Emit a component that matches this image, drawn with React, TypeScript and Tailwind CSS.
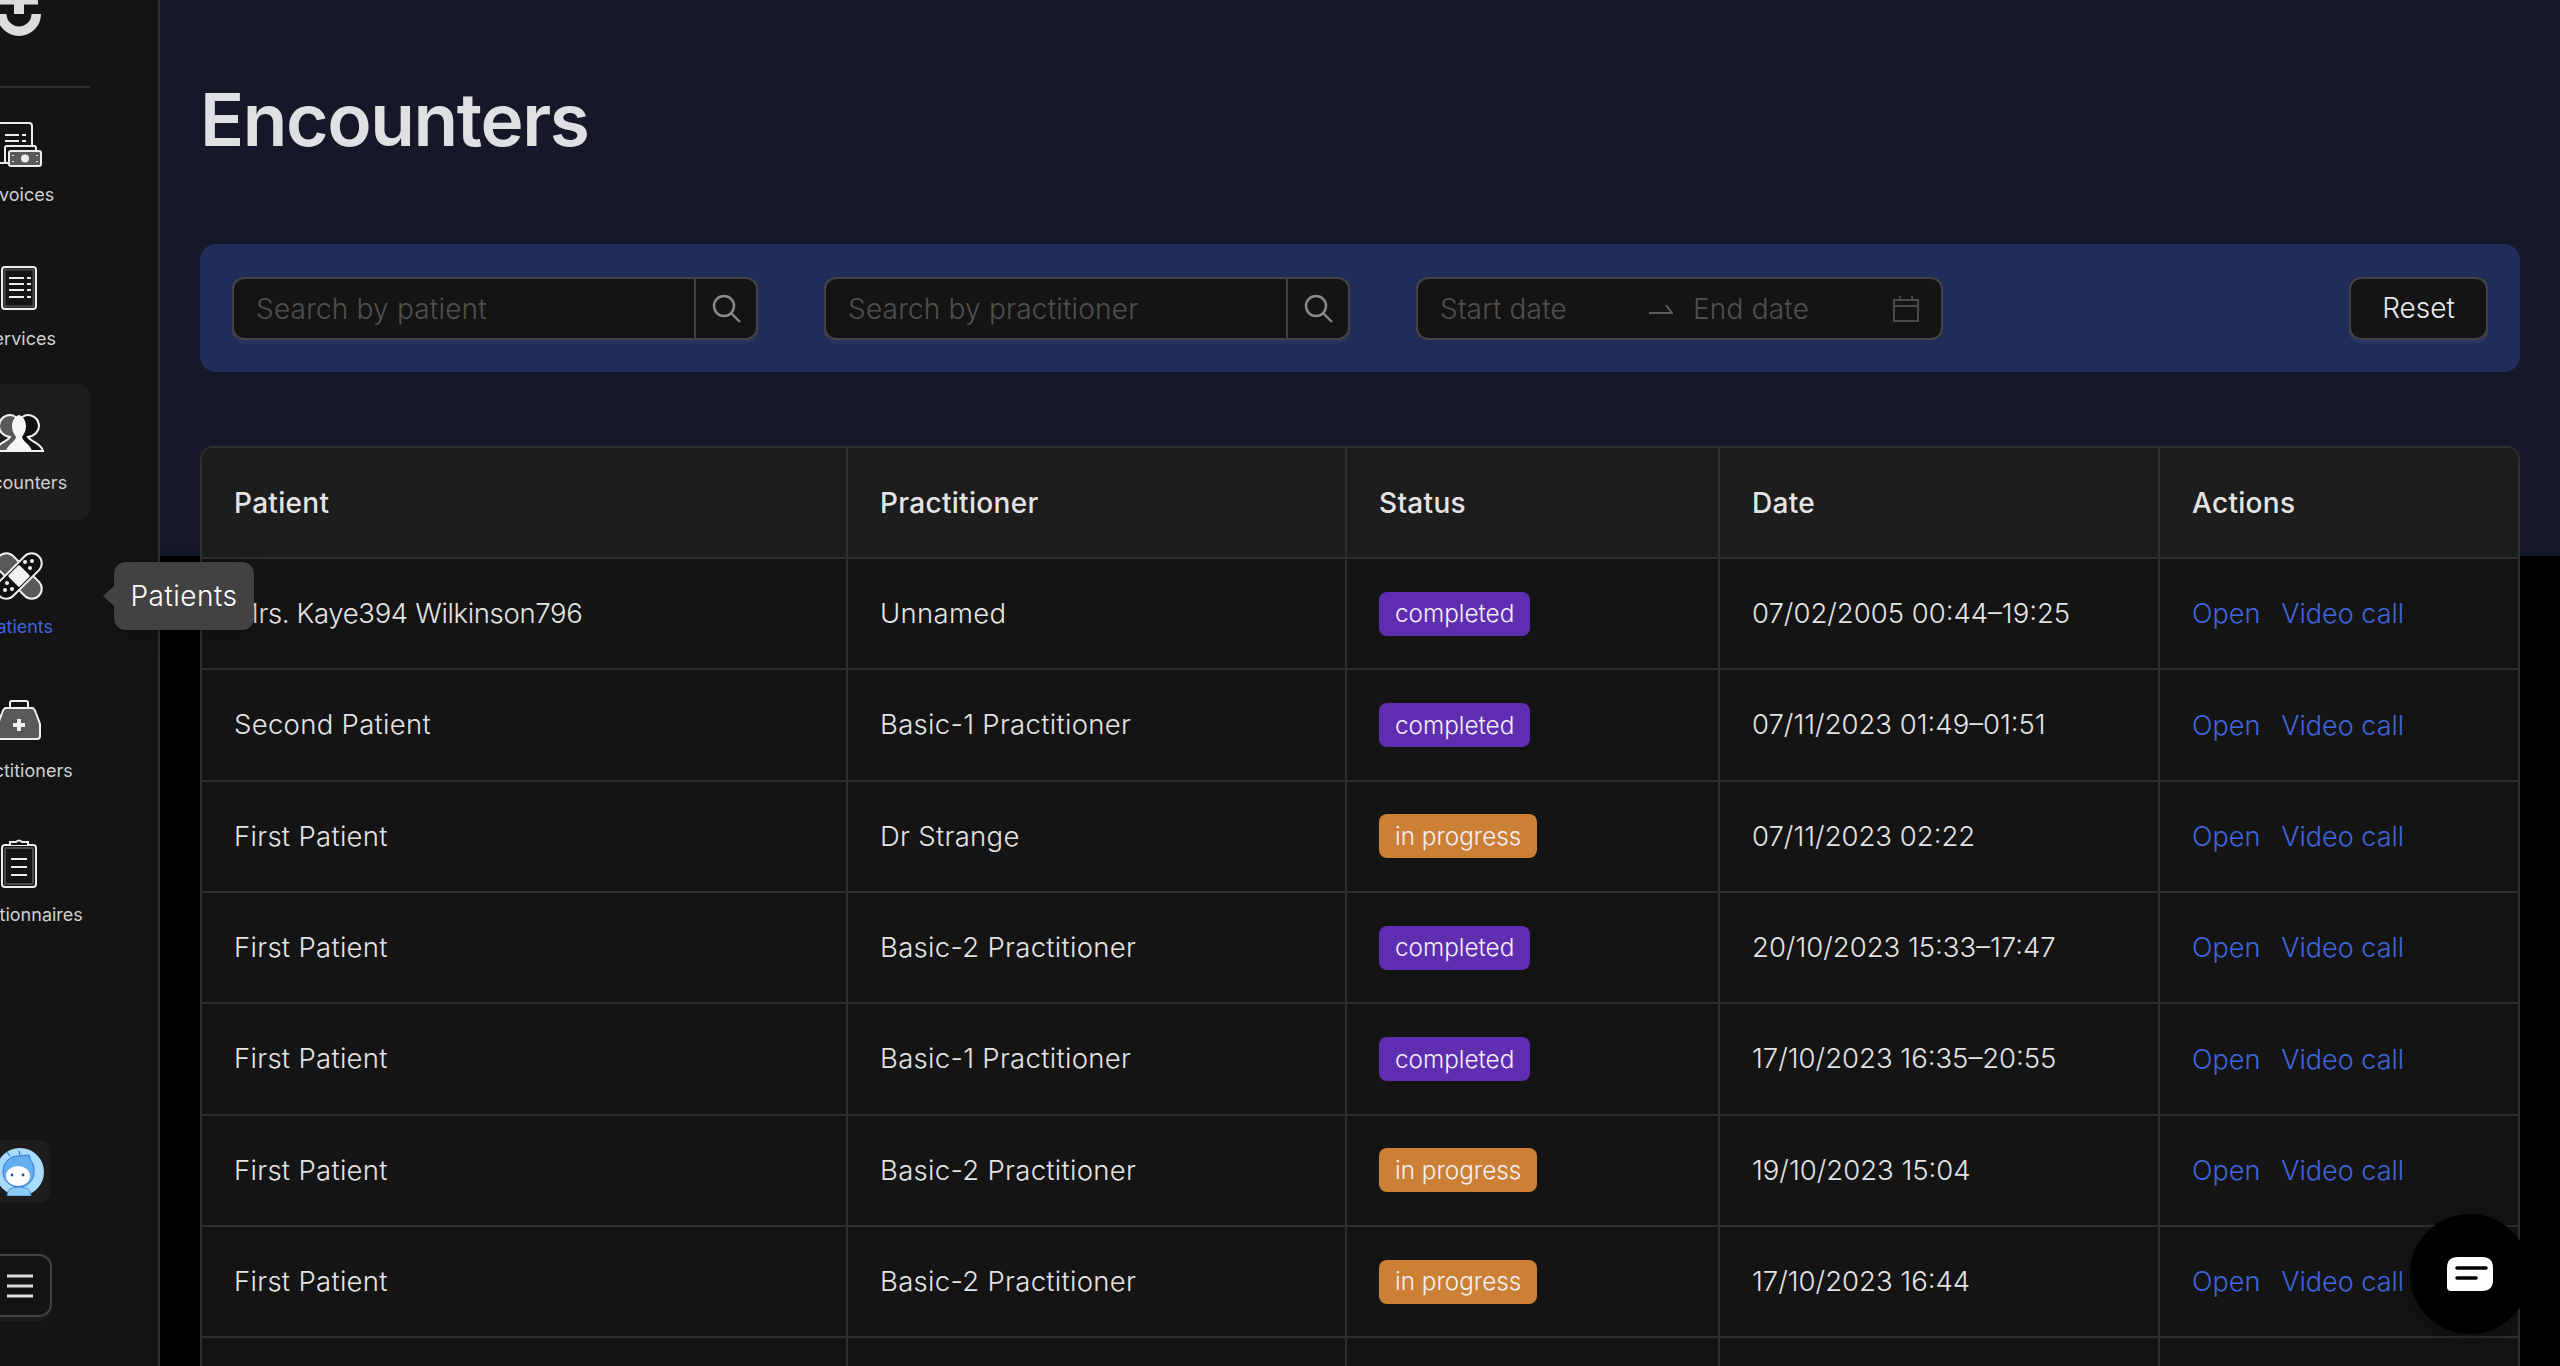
import type { ReactNode } from "react";

const rows = [
  { patient: "Mrs. Kaye394 Wilkinson796", practitioner: "Unnamed", status: "completed", date: "07/02/2005 00:44–19:25" },
  { patient: "Second Patient", practitioner: "Basic-1 Practitioner", status: "completed", date: "07/11/2023 01:49–01:51" },
  { patient: "First Patient", practitioner: "Dr Strange", status: "in progress", date: "07/11/2023 02:22" },
  { patient: "First Patient", practitioner: "Basic-2 Practitioner", status: "completed", date: "20/10/2023 15:33–17:47" },
  { patient: "First Patient", practitioner: "Basic-1 Practitioner", status: "completed", date: "17/10/2023 16:35–20:55" },
  { patient: "First Patient", practitioner: "Basic-2 Practitioner", status: "in progress", date: "19/10/2023 15:04" },
  { patient: "First Patient", practitioner: "Basic-2 Practitioner", status: "in progress", date: "17/10/2023 16:44" },
];

const gridCols = "grid grid-cols-[646px_499px_373px_440px_1fr]";
const cell = "flex items-center px-[32px] border-r-2 border-[#2f2f2f] last:border-r-0";

function InvoicesIcon() {
  return (
    <svg width="44" height="44" viewBox="0 0 44 44" fill="none" stroke="#ececec" strokeWidth="2" className="overflow-visible">
      <rect x="1" y="1" width="34" height="40" rx="3" fill="#141414" />
      <path d="M8 13h14M8 19h14M25 13h4M25 19h4" />
      <rect x="8" y="24" width="31" height="17" rx="2" fill="#141414" />
      <rect x="12" y="29" width="32" height="15" rx="2" fill="#595959" />
      <circle cx="28" cy="36.5" r="4" fill="#ececec" stroke="none" />
      <path d="M16 33v1M16 39v1M40 33v1M40 39v1" />
    </svg>
  );
}

function ServicesIcon() {
  return (
    <svg width="44" height="44" viewBox="0 0 44 44" fill="none" stroke="#ececec" strokeWidth="2">
      <rect x="5" y="1" width="34" height="42" rx="3" fill="#141414" />
      <rect x="7.5" y="3.5" width="29" height="37" rx="1" stroke="#4a4a4a" />
      <path d="M12 12h15M12 18h15M12 24h15M12 31h15M30 12h4M30 18h4M30 24h4M30 31h4" />
    </svg>
  );
}

function EncountersIcon() {
  return (
    <svg width="44" height="44" viewBox="0 0 44 44" fill="none" stroke="#f2f2f2" strokeWidth="2" className="overflow-visible mt-[2px]">
      <path d="M31 25c3 5 13 6 15 14H22V10c2-5 5-7 9-7 6 0 11 5 11 11 0 5-4 10-11 11Z" fill="#111" />
      <path d="M13 25c-3 5-13 6-15 14h24V10c-2-5-5-7-9-7C7 3 2 8 2 14c0 5 4 10 11 11Z" fill="#595959" />
      <path d="M22 3c4 1 7 6 7 11 0 5-2 8-4 11 1 5 8 7 10 14H9c2-7 9-9 10-14-2-3-4-6-4-11 0-5 3-10 7-11Z" fill="#f6f6f6" stroke="none" />
      <path d="M-2 39h48" />
    </svg>
  );
}

function PatientsIcon() {
  return (
    <svg width="44" height="44" viewBox="0 0 44 44" fill="none" stroke="#f0f0f0" strokeWidth="2" className="overflow-visible">
      <rect x="-6" y="12" width="56" height="20" rx="10" fill="#595959" transform="rotate(45 22 22)" />
      <rect x="-6" y="12" width="56" height="20" rx="10" fill="#111" transform="rotate(-45 22 22)" />
      <rect x="14" y="14" width="16" height="16" rx="1.5" fill="#f2f2f2" stroke="none" transform="rotate(-45 22 22)" />
      <g fill="#f2f2f2" stroke="none">
        <circle cx="28" cy="8" r="2" />
        <circle cx="35" cy="7" r="2" />
        <circle cx="33" cy="14" r="2" />
        <circle cx="10" cy="29" r="2" />
        <circle cx="8" cy="36" r="2" />
        <circle cx="15" cy="35" r="2" />
      </g>
    </svg>
  );
}

function PractitionersIcon() {
  return (
    <svg width="44" height="44" viewBox="0 0 44 44" fill="none" stroke="#f0f0f0" strokeWidth="2" className="overflow-visible">
      <path d="M13 10V5q0-2 2-2h14q2 0 2 2v5" />
      <path d="M9 10h26c2 0 3 2 4 5l4 11v12q0 3-3 3H4q-3 0-3-3V26l4-11c1-3 2-5 4-5Z" fill="#595959" />
      <path d="M16 27h12M22 21v12" strokeWidth="4" />
    </svg>
  );
}

function QuestionnairesIcon() {
  return (
    <svg width="44" height="50" viewBox="0 0 44 50" fill="none" stroke="#ececec" strokeWidth="2" className="-mt-[3px]">
      <rect x="5" y="6" width="34" height="42" rx="3" fill="#141414" />
      <rect x="8" y="9" width="28" height="36" rx="1" stroke="#4a4a4a" />
      <path d="M13 6V3h6q3-3 6 0h6v3" fill="#141414" />
      <path d="M14 20h16M14 28h16M14 36h16" />
    </svg>
  );
}

function Avatar() {
  return (
    <svg width="48" height="48" viewBox="0 0 48 48">
      <circle cx="24" cy="24" r="24" fill="#a9dbff" />
      <path d="M7 24c0-10 7-16 15-16 4 0 8-1 11-1 1 3 1 5 3 7 2 3 2 6 2 10 0 9-7 15-15 15S7 33 7 24Z" fill="#62aef0" stroke="#2f78d0" strokeWidth="1" />
      <path d="M14 8l-3-4M24 7l-1-4" stroke="#2f78d0" strokeWidth="1.2" fill="none" />
      <ellipse cx="22" cy="28" rx="12" ry="10" fill="#fff" />
      <circle cx="16" cy="27" r="1.400" fill="#1f4fa8" />
      <circle cx="27" cy="27" r="1.400" fill="#1f4fa8" />
      <path d="M11 48c0-6 4-9 12-9s12 3 12 9Z" fill="#8ccaf8" stroke="#2f78d0" strokeWidth="0.800" />
    </svg>
  );
}

function NavItem({ label, icon, active, selected }: { label: string; icon: ReactNode; active?: boolean; selected?: boolean }) {
  return (
    <div className={`h-[136px] rounded-[13px] flex flex-col items-center pt-[26px] ${active ? "bg-[#1d1d1d]" : ""}`}>
      <div className="h-[53px] flex items-start">{icon}</div>
      <span className={`text-[18px] leading-[40px] whitespace-nowrap ${selected ? "text-[#3f66dc]" : "text-[#d0d0d0]"}`}>
        {label}
      </span>
    </div>
  );
}

function Sidebar() {
  return (
    <aside className="w-[160px] shrink-0 h-full bg-[#141414] border-r-2 border-[#303030] overflow-hidden">
      <div className="-ml-[52px] w-[142px] h-full flex flex-col pb-[49px]">
        <div className="h-[86px] shrink-0">
          <svg width="60" height="40" viewBox="0 0 60 40" className="mx-auto" fill="#dcdcdc">
            <path d="M8 14h9.5a12.500 12.500 0 0 0 25 0H52a22 22 0 0 1-44 0Z" />
            <rect x="11" y="0" width="38" height="4.500" />
            <rect x="25" y="0" width="10" height="14" />
          </svg>
        </div>
        <div className="h-[2px] bg-[#2f2f2f] shrink-0" />
        <nav className="flex flex-col gap-[8px] mt-[8px]">
          <NavItem label="Invoices" icon={<InvoicesIcon />} />
          <NavItem label="Services" icon={<ServicesIcon />} />
          <NavItem label="Encounters" icon={<EncountersIcon />} active />
          <NavItem label="Patients" icon={<PatientsIcon />} selected />
          <NavItem label="Practitioners" icon={<PractitionersIcon />} />
          <NavItem label="Questionnaires" icon={<QuestionnairesIcon />} />
        </nav>
        <div className="mt-auto flex flex-col items-center">
          <div className="w-[60px] h-[63px] ml-[2px] rounded-[10px] bg-[#1d1d1d] flex items-center justify-center">
            <Avatar />
          </div>
          <button type="button" className="mt-[51px] w-[64px] h-[63px] ml-[2px] rounded-[13px] bg-[#141414] border-2 border-[#434343] shadow-[0_4px_0_rgba(255,255,255,0.04)] flex items-center justify-center">
            <svg width="26" height="24" viewBox="0 0 26 24" stroke="#dedede" strokeWidth="3">
              <path d="M0 2h26M0 12h26M0 22h26" />
            </svg>
          </button>
        </div>
      </div>
    </aside>
  );
}

function SearchField({ placeholder }: { placeholder: string }) {
  return (
    <div className="w-[526px] h-[63px] flex rounded-[12px] bg-[#141414] border-2 border-[#434343] shadow-[0_4px_0_rgba(255,255,255,0.03)]">
      <input
        placeholder={placeholder}
        className="flex-1 min-w-0 bg-transparent pl-[22px] pt-[1px] text-[28px] tracking-[0.2px] font-light outline-none placeholder:text-[#505050]"
      />
      <button type="button" className="w-[62px] shrink-0 border-l-2 border-[#434343] flex items-center justify-center">
        <svg width="29" height="29" viewBox="0 0 29 29" fill="none" stroke="#8a8a8a" strokeWidth="2.400">
          <circle cx="12" cy="12" r="10" />
          <path d="M19 19l9 9" />
        </svg>
      </button>
    </div>
  );
}

function DateRange() {
  return (
    <div className="w-[527px] h-[63px] flex items-center rounded-[12px] bg-[#141414] border-2 border-[#434343] pl-[22px] pr-[22px] pt-[1px] text-[28px] tracking-[0.2px] font-light text-[#505050]">
      <span className="w-[209px]">Start date</span>
      <svg width="24" height="10" viewBox="0 0 24 10" fill="none" stroke="#5c5c5c" strokeWidth="2">
        <path d="M0 9h23l-6-8" />
      </svg>
      <span className="ml-[20px]">End date</span>
      <svg width="26" height="26" viewBox="0 0 26 26" fill="none" stroke="#4a4a4a" strokeWidth="2" className="ml-auto">
        <rect x="1" y="4" width="24" height="21" />
        <path d="M1 10h24M7 0v4M19 0v4" />
      </svg>
    </div>
  );
}

function Badge({ status }: { status: string }) {
  const done = status === "completed";
  return (
    <span className={`h-[44px] px-[16px] rounded-[8px] flex items-center text-[24.3px] tracking-normal text-[#f4f0fa] ${done ? "bg-[#5f2eb0]" : "bg-[#cb8035]"}`}>
      {status}
    </span>
  );
}

export default function App() {
  return (
    <div className="h-screen overflow-hidden flex bg-black text-[#e4e4e4] font-['Inter',sans-serif] relative">
      <Sidebar />

      <main className="flex-1 min-w-0 px-[40px] pt-[80px] bg-[linear-gradient(#141829_556px,#000_556px)]">
        <h1 className="text-[73px] leading-[80px] font-semibold text-[#dfe0e2] tracking-[-1.4px]">Encounters</h1>

        <div className="mt-[84px] h-[128px] rounded-[16px] bg-[#202d5a] px-[32px] flex items-center gap-[66px]">
          <SearchField placeholder="Search by patient" />
          <SearchField placeholder="Search by practitioner" />
          <DateRange />
          <button type="button" className="ml-auto w-[139px] h-[63px] rounded-[12px] bg-[#141414] border-2 border-[#434343] shadow-[0_4px_0_rgba(255,255,255,0.04)] text-[28px] font-light text-[#e8e8e8]">
            Reset
          </button>
        </div>

        <div className="mt-[74px] rounded-t-[13px] border-2 border-b-0 border-[#2f2f2f] bg-[#141414] overflow-hidden text-[27.5px] tracking-[0.3px] font-light">
          <div className={`${gridCols} h-[111px] bg-[#1d1d1d] text-[28px] font-medium border-b-2 border-[#2f2f2f]`}>
            {["Patient", "Practitioner", "Status", "Date", "Actions"].map((h) => (
              <div key={h} className={cell}>{h}</div>
            ))}
          </div>
          {rows.map((r, i) => (
            <div key={i} className={`${gridCols} h-[111.33px] border-b-2 border-[#2f2f2f]`}>
              <div className={`${cell} ${i === 0 ? "tracking-[-0.35px]" : ""}`}>{r.patient}</div>
              <div className={cell}>{r.practitioner}</div>
              <div className={cell}><Badge status={r.status} /></div>
              <div className={`${cell} tracking-normal`}>{r.date}</div>
              <div className={`${cell} gap-[21px] pt-[2px] text-[27px] tracking-normal text-[#3f66dc]`}>
                <a>Open</a>
                <a>Video call</a>
              </div>
            </div>
          ))}
          <div className={`${gridCols} h-[111px]`}>
            <div className={cell} />
            <div className={cell} />
            <div className={cell} />
            <div className={cell} />
            <div className={cell} />
          </div>
        </div>
      </main>

      <div className="absolute left-[114px] top-[562px] h-[68px] w-[140px] rounded-[12px] bg-[#424242] flex items-center justify-center text-[28px] tracking-[0.5px] font-light text-white shadow-[0_6px_24px_rgba(0,0,0,0.2)]">
        <span className="absolute -left-[11px] top-[24px] w-0 h-0 border-y-[10px] border-y-transparent border-r-[11px] border-r-[#424242]" />
        Patients
      </div>

      <button type="button" className="absolute left-[2410px] top-[1214px] w-[120px] h-[120px] rounded-full bg-black shadow-[0_6px_20px_rgba(0,0,0,0.3)] flex items-center justify-center">
        <svg width="46" height="34" viewBox="0 0 46 34">
          <path d="M11 0h24q11 0 11 11v12q0 11-11 11H4q-4 0-4-4V11Q0 0 11 0Z" fill="#fff" />
          <path d="M10 11h29M10 21h19" stroke="#000" strokeWidth="3.500" strokeLinecap="round" />
        </svg>
      </button>
    </div>
  );
}
